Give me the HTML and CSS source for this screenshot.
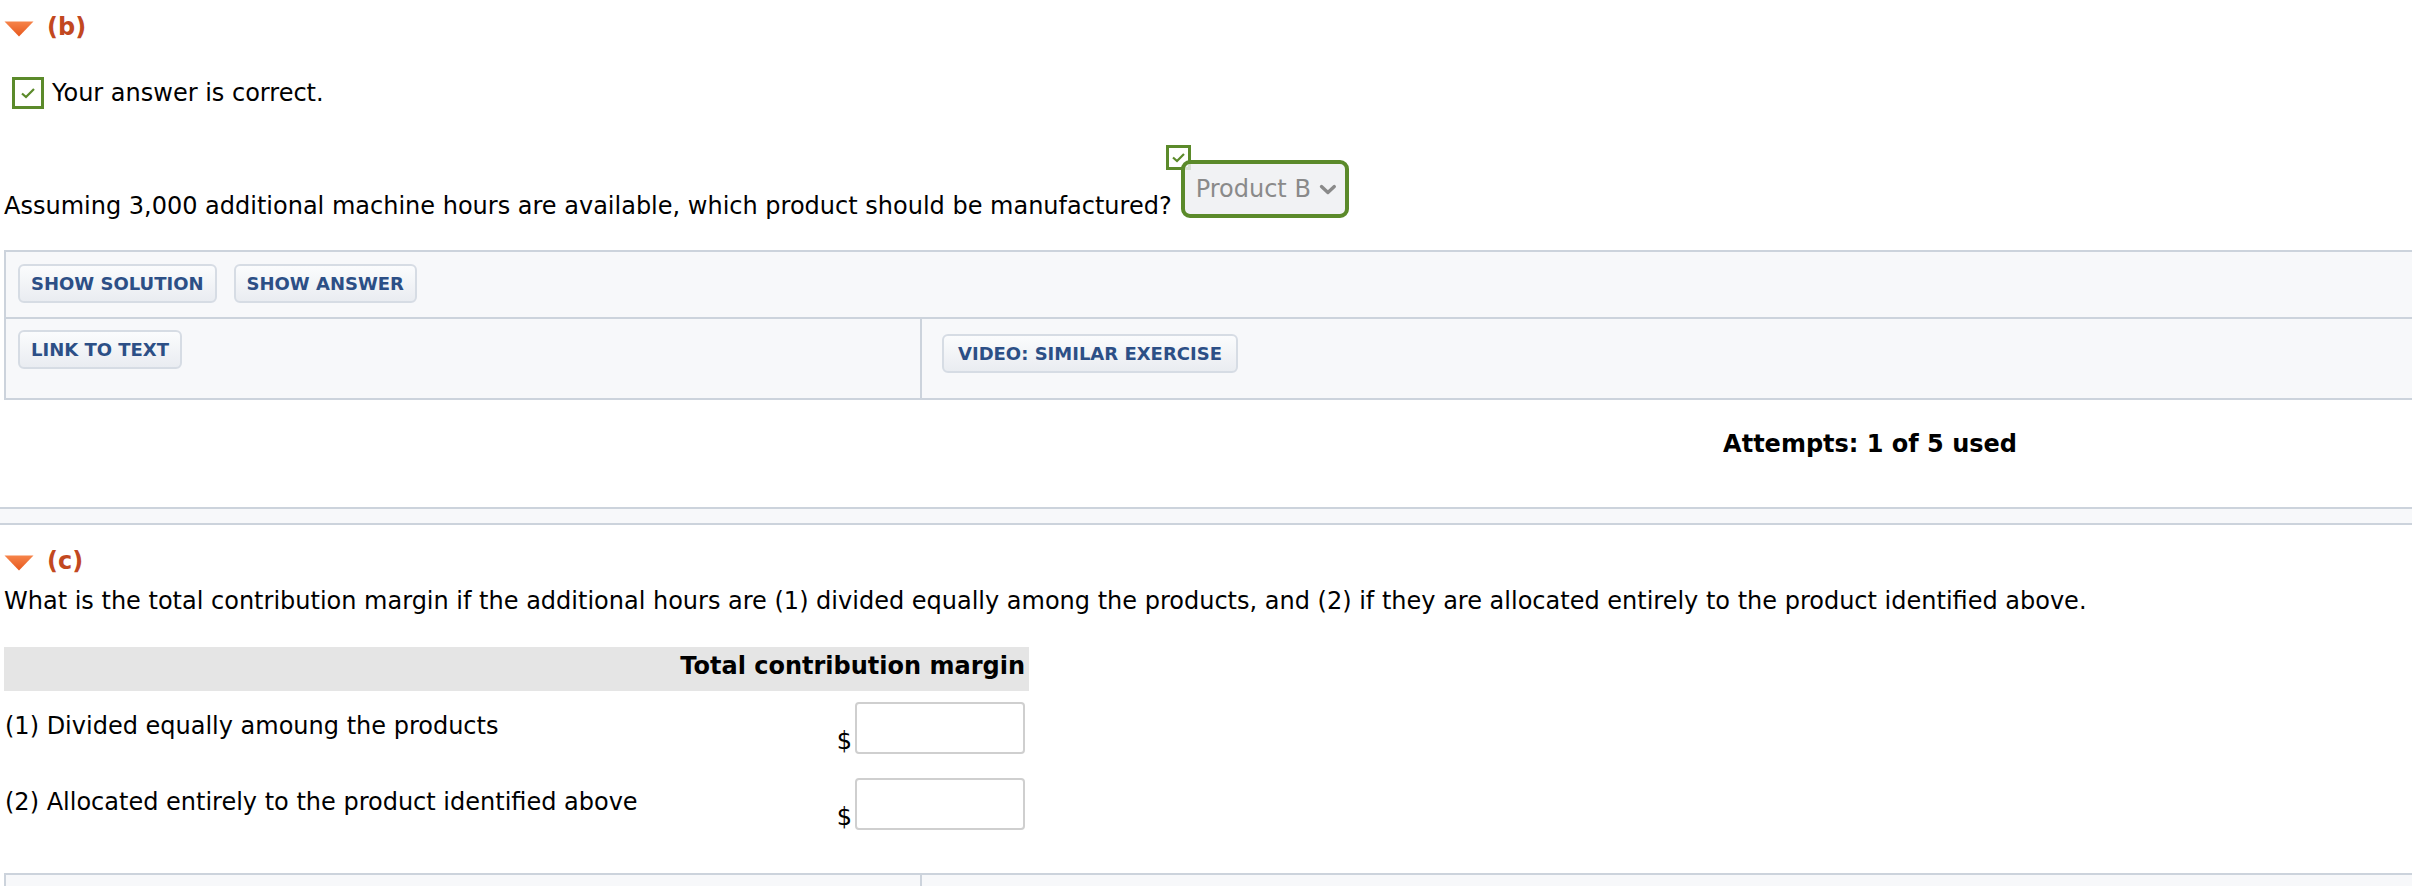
FILE: index.html
```html
<!DOCTYPE html>
<html lang="en">
<head>
<meta charset="utf-8">
<title>Part b and c</title>
<link rel="stylesheet" href="styles.css">
</head>
<body>
<div class="page">
  <div class="part-head first">
    <svg class="caret" width="30" height="16" viewBox="0 0 30 16"><defs><linearGradient id="cg" x1="0" y1="0" x2="0" y2="1"><stop offset="0" stop-color="#f6844a"/><stop offset="1" stop-color="#e7581d"/></linearGradient></defs><polygon points="0.5,0.5 29.5,0.5 15,15.5" fill="url(#cg)"/></svg>
    <span class="part-label">(b)</span>
  </div>

  <div class="feedback">
    <span class="check big"><svg width="26" height="26" viewBox="0 0 26 26"><polyline points="7,13.5 11,17 19,9" fill="none" stroke="#5b8a2a" stroke-width="2.2"/></svg></span>
    <span>Your answer is correct.</span>
  </div>

  <div class="question-row">
    <span class="q-text">Assuming 3,000 additional machine hours are available, which product should be manufactured?</span>
    <span class="select-wrap">
      <span class="check small"><svg width="19" height="19" viewBox="0 0 19 19"><polyline points="4,9.5 8,13 15,6" fill="none" stroke="#5b8a2a" stroke-width="2.2"/></svg></span>
      <span class="select">Product B<svg class="chev" width="18" height="11" viewBox="0 0 18 11"><polyline points="2.5,2.5 9,8.5 15.5,2.5" fill="none" stroke="#8a8a8a" stroke-width="3.4" stroke-linecap="round" stroke-linejoin="round"/></svg></span>
    </span>
  </div>

  <div class="panel">
    <div class="panel-row row-one">
      <div class="cell">
        <button class="btn">SHOW SOLUTION</button>
        <button class="btn">SHOW ANSWER</button>
      </div>
    </div>
    <div class="panel-row row-two">
      <div class="cell left">
        <button class="btn">LINK TO TEXT</button>
      </div>
      <div class="cell right">
        <button class="btn video">VIDEO: SIMILAR EXERCISE</button>
      </div>
    </div>
  </div>

  <div class="attempts">Attempts: 1 of 5 used</div>

  <div class="separator"></div>

  <div class="part-head second">
    <svg class="caret" width="30" height="16" viewBox="0 0 30 16"><defs><linearGradient id="cg2" x1="0" y1="0" x2="0" y2="1"><stop offset="0" stop-color="#f6844a"/><stop offset="1" stop-color="#e7581d"/></linearGradient></defs><polygon points="0.5,0.5 29.5,0.5 15,15.5" fill="url(#cg2)"/></svg>
    <span class="part-label">(c)</span>
  </div>
  <div class="q-text-c">What is the total contribution margin if the additional hours are (1) divided equally among the products, and (2) if they are allocated entirely to the product identified above.</div>

  <div class="cm-table">
    <div class="cm-head">Total contribution margin</div>
    <div class="cm-row">
      <div class="cm-label">(1) Divided equally amoung the products</div>
      <div class="cm-value"><span class="dollar">$</span><input class="cm-input" type="text"></div>
    </div>
    <div class="cm-row">
      <div class="cm-label">(2) Allocated entirely to the product identified above</div>
      <div class="cm-value"><span class="dollar">$</span><input class="cm-input" type="text"></div>
    </div>
  </div>

  <div class="panel-bottom">
    <div class="cell left"></div>
    <div class="cell right"></div>
  </div>
</div>
</body>
</html>
```

FILE: styles.css
```css
html, body {
  margin: 0;
  padding: 0;
  background: #ffffff;
  overflow: hidden;
}
body {
  font-family: "DejaVu Sans", Verdana, sans-serif;
  font-size: 24px;
  line-height: 29px;
  color: #000000;
}
.page {
  width: 2412px;
  height: 886px;
  overflow: hidden;
}

.part-head {
  display: flex;
  align-items: center;
  margin-left: 4px;
  height: 29px;
}
.part-head.first { margin-top: 13px; }
.part-head.second { margin-top: 22px; }
.caret {
  display: block;
  margin-top: 3px;
  margin-right: 13px;
}
.part-label {
  font-weight: bold;
  color: #c2481f;
}

.feedback {
  display: flex;
  align-items: center;
  margin-top: 35px;
  margin-left: 12px;
  height: 32px;
}
.check {
  display: inline-block;
  box-sizing: border-box;
  border: 3px solid #5b8a2a;
  background: #ffffff;
}
.check svg { display: block; }
.check.big {
  width: 32px;
  height: 32px;
  margin-right: 8px;
}
.check.small {
  width: 25px;
  height: 25px;
  position: absolute;
  left: -15px;
  top: -15px;
  z-index: 0;
}

.question-row {
  display: flex;
  align-items: flex-end;
  margin-top: 51px;
  margin-left: 4px;
}
.q-text {
  position: relative;
  top: 1px;
}
.select-wrap {
  position: relative;
  margin-left: 9px;
  margin-bottom: 2px;
}
.select {
  position: relative;
  z-index: 1;
  display: flex;
  align-items: center;
  box-sizing: border-box;
  height: 58px;
  width: 168px;
  padding: 0 8px 0 11px;
  border: 4px solid #5b8a2a;
  border-radius: 9px;
  background: rgba(239, 240, 242, 0.85);
  color: #8a8a8a;
  white-space: nowrap;
}
.chev {
  display: block;
  margin-left: 8px;
  margin-top: 1px;
}

.panel {
  margin-top: 30px;
  margin-left: 4px;
  border: 2px solid #ccd3dc;
  border-right: none;
  background: #f7f8fa;
}
.panel-row.row-one {
  box-sizing: border-box;
  height: 67px;
  border-bottom: 2px solid #ccd3dc;
}
.panel-row.row-one .cell {
  display: flex;
  gap: 17px;
  padding: 12px 0 0 12px;
}
.panel-row.row-two {
  display: grid;
  grid-template-columns: 914px 1fr;
  height: 79px;
}
.row-two .cell.left {
  padding: 11px 0 0 12px;
}
.row-two .cell.right {
  border-left: 2px solid #ccd3dc;
  padding: 15px 0 0 20px;
}

.btn {
  box-sizing: border-box;
  height: 39px;
  padding: 0 11px;
  margin: 0;
  border: 2px solid #d6dce4;
  border-radius: 6px;
  background: linear-gradient(#fbfcfd, #e9ecf1);
  font-family: "DejaVu Sans", Verdana, sans-serif;
  font-weight: bold;
  font-size: 18px;
  line-height: 35px;
  color: #2c4f86;
  cursor: pointer;
}
.btn.video {
  padding: 0 14px;
}

.attempts {
  margin-top: 30px;
  text-align: right;
  padding-right: 395px;
  font-weight: bold;
}

.separator {
  margin-top: 48px;
  height: 14px;
  border-top: 2px solid #ccd3dc;
  border-bottom: 2px solid #ccd3dc;
  background: #f7f8fa;
}

.q-text-c {
  margin-top: 11px;
  margin-left: 4px;
}

.cm-table {
  margin-top: 31px;
  margin-left: 4px;
  width: 1025px;
}
.cm-head {
  box-sizing: border-box;
  height: 44px;
  padding: 5px 4px 0 0;
  background: #e5e5e5;
  text-align: right;
  font-weight: bold;
}
.cm-row {
  display: flex;
  justify-content: space-between;
  height: 76px;
}
.cm-label {
  padding-top: 21px;
  padding-left: 1px;
}
.cm-value {
  display: flex;
  align-items: flex-end;
  padding-top: 11px;
  padding-right: 4px;
  height: 52px;
}
.dollar {
  margin-right: 3px;
  line-height: 29px;
  margin-bottom: -2px;
}
.cm-input {
  box-sizing: border-box;
  width: 170px;
  height: 52px;
  margin: 0;
  border: 2px solid #cfcfcf;
  border-radius: 4px;
  background: #ffffff;
}

.panel-bottom {
  display: grid;
  grid-template-columns: 914px 1fr;
  margin-top: 30px;
  margin-left: 4px;
  height: 40px;
  border-top: 2px solid #ccd3dc;
  border-left: 2px solid #ccd3dc;
  background: #f7f8fa;
}
.panel-bottom .cell.right {
  border-left: 2px solid #ccd3dc;
}
```
